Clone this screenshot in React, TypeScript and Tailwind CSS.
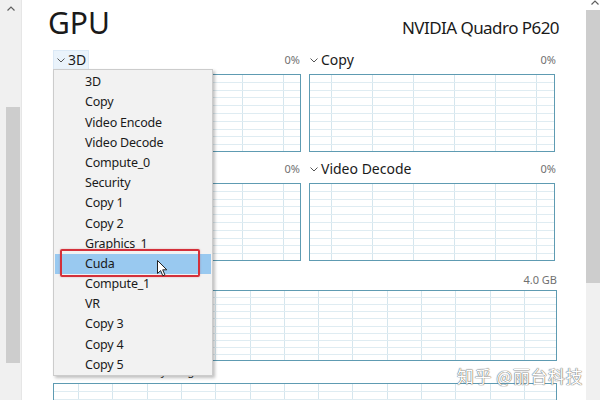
import React from "react";

const Graph = ({ w, h, step, offset = 25 }: { w: number; h: number; step: number; offset?: number }) => {
  const vs: number[] = [];
  for (let x = offset; x < w - 2; x += step) vs.push(Math.round(x) + 0.5);
  const hs: number[] = [];
  for (let i = 1; i < 10; i++) hs.push(Math.round((i * h) / 10) + 0.5);
  return (
    <svg width={w} height={h} className="block shrink-0">
      <rect x={0} y={0} width={w} height={h} fill="#ffffff" />
      {vs.map((x) => (
        <line key={"v" + x} x1={x} y1={0} x2={x} y2={h} stroke="#d5e6ee" strokeWidth={1} />
      ))}
      {hs.map((y) => (
        <line key={"h" + y} x1={0} y1={y} x2={w} y2={y} stroke="#dfecf2" strokeWidth={1} />
      ))}
      <rect x={0.5} y={0.5} width={w - 1} height={h - 1} fill="none" stroke="#5e9bb2" strokeWidth={1} />
    </svg>
  );
};

const Chevron = () => (
  <svg width="8" height="5" viewBox="0 0 8 5" className="shrink-0">
    <path d="M0.5 0.5 L4 4 L7.5 0.5" fill="none" stroke="#555" strokeWidth="1" />
  </svg>
);

const items = [
  "3D",
  "Copy",
  "Video Encode",
  "Video Decode",
  "Compute_0",
  "Security",
  "Copy 1",
  "Copy 2",
  "Graphics_1",
  "Cuda",
  "Compute_1",
  "VR",
  "Copy 3",
  "Copy 4",
  "Copy 5",
];

export default function App() {
  return (
    <div className="relative w-[600px] h-[400px] overflow-hidden flex bg-white text-[#1a1a1a] font-['Noto_Sans','Noto_Sans_CJK_SC',sans-serif]">
      {/* left scrollbar */}
      <div className="w-[22px] shrink-0 bg-[#f0f0f0] border-r border-[#e6e6e6] flex flex-col">
        <div className="h-[107px] flex justify-center pt-[6px]">
          <svg width="8" height="5" viewBox="0 0 8 5">
            <path d="M0.5 4.5 L4 1 L7.5 4.5" fill="none" stroke="#606060" strokeWidth="1.2" />
          </svg>
        </div>
        <div className="ml-[6px] w-[14px] h-[256px] bg-[#cdcdcd]" />
      </div>

      {/* content */}
      <div className="flex-1 pl-[31px] pr-[29px] pt-[8px] flex flex-col">
        <div className="flex items-baseline justify-between h-[30px]">
          <span className="text-[30px] leading-[30px] -ml-[5px]">GPU</span>
          <span className="text-[17px] leading-[30px] tracking-[-0.55px] mr-[-2px]">NVIDIA Quadro P620</span>
        </div>

        {/* row 1 */}
        <div className="mt-[12px] flex gap-[8px]">
          <div className="w-[248px] flex flex-col">
            <div className="h-[20px] flex items-center justify-between">
              <div className="h-[21px] flex items-center gap-[3px] pl-[3px] pr-[2px] bg-[#eaf3fb] border border-[#dbe9f6]">
                <Chevron />
                <span className="text-[14px] leading-[20px]">3D</span>
              </div>
              <span className="text-[11px] text-[#707070] mr-[1px]">0%</span>
            </div>
            <div className="mt-[4px]">
              <Graph w={248} h={78} step={41} />
            </div>
          </div>
          <div className="w-[248px] flex flex-col">
            <div className="h-[20px] flex items-center justify-between">
              <div className="flex items-center gap-[3px] pl-[1px]">
                <Chevron />
                <span className="text-[14px] leading-[20px]">Copy</span>
              </div>
              <span className="text-[11px] text-[#707070] mr-[1px]">0%</span>
            </div>
            <div className="mt-[4px]">
              <Graph w={246} h={78} step={41} offset={22} />
            </div>
          </div>
        </div>

        {/* row 2 */}
        <div className="mt-[7px] flex gap-[8px]">
          <div className="w-[248px] flex flex-col">
            <div className="h-[20px] flex items-center justify-end">
              <span className="text-[11px] text-[#707070] mr-[1px]">0%</span>
            </div>
            <div className="mt-[4px]">
              <Graph w={248} h={78} step={41} />
            </div>
          </div>
          <div className="w-[248px] flex flex-col">
            <div className="h-[20px] flex items-center justify-between">
              <div className="flex items-center gap-[3px] pl-[1px]">
                <Chevron />
                <span className="text-[14px] leading-[20px]">Video Decode</span>
              </div>
              <span className="text-[11px] text-[#707070] mr-[1px]">0%</span>
            </div>
            <div className="mt-[4px]">
              <Graph w={246} h={78} step={41} offset={22} />
            </div>
          </div>
        </div>

        {/* dedicated memory */}
        <div className="mt-[11px] h-[16px] flex items-center justify-end text-[11px] leading-[16px] text-[#707070]">
          <span>4.0 GB</span>
        </div>
        <div className="mt-[2px]">
          <Graph w={504} h={71} step={34.3} />
        </div>

        {/* shared memory */}
        <div className="mt-[2px] h-[16px] flex items-center text-[11px] leading-[16px] text-[#333] pl-[5px]">
          <span>Shared GPU memory usage</span>
        </div>
        <div className="mt-[4px]">
          <Graph w={504} h={78} step={34.3} />
        </div>
      </div>

      {/* right scrollbar */}
      <div className="w-[14px] shrink-0 flex flex-col bg-[#f0f0f0]">
        <div className="h-[10px] bg-white flex justify-end items-start pr-[1px]">
          <svg width="8" height="5" viewBox="0 0 8 5">
            <path d="M0.5 4.5 L4 1 L7.5 4.5" fill="none" stroke="#606060" strokeWidth="1.2" />
          </svg>
        </div>
        <div className="w-[14px] h-[273px] bg-[#cdcdcd]" />
      </div>

      {/* dropdown menu */}
      <div className="absolute left-[53px] top-[69px] w-[160px] h-[307px] bg-[#f2f2f2] border border-[#cccccc] shadow-[2px_2px_3px_rgba(0,0,0,0.25)] pt-[2.5px]">
        {items.map((it) => (
          <div
            key={it}
            className={
              it === "Cuda"
                ? "mx-[1px] h-[20.2px] flex items-center pl-[30px] text-[12.5px] tracking-[-0.2px] bg-[#99c9f0]"
                : "mx-[1px] h-[20.2px] flex items-center pl-[30px] text-[12.5px] tracking-[-0.2px]"
            }
          >
            {it}
          </div>
        ))}
      </div>

      {/* red highlight box */}
      <div className="absolute left-[60px] top-[249px] w-[140px] h-[28px] border-2 border-[#d4303a] rounded-[2px] shadow-[0_0_2px_rgba(180,40,40,0.35)]" />

      {/* mouse cursor */}
      <svg className="absolute left-[157px] top-[260px]" width="11" height="17" viewBox="0 0 11 17">
        <path d="M0.5 0.5 L0.5 13.5 L3.6 10.6 L5.8 15.8 L7.9 14.9 L5.7 9.8 L9.8 9.8 Z" fill="#fff" stroke="#222" strokeWidth="1" strokeLinejoin="round" />
      </svg>

      {/* watermark */}
      <div className="absolute left-[457px] top-[366px] text-[17px] leading-[20px] text-white tracking-[0.5px] [text-shadow:0_0_1px_#555,0_0_1px_#555] font-['Noto_Sans_CJK_SC',sans-serif]">
        知乎 @丽台科技
      </div>
    </div>
  );
}
